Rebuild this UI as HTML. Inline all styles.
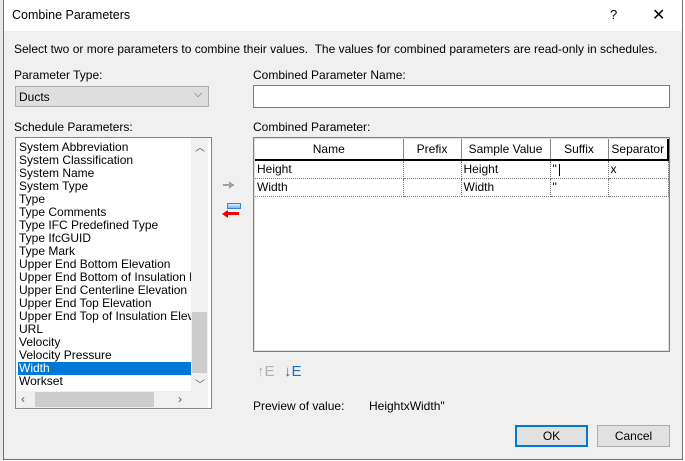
<!DOCTYPE html>
<html><head><style>
*{margin:0;padding:0;box-sizing:border-box}
body{width:685px;height:461px;background:#fff;font-family:"Liberation Sans",sans-serif;font-size:12px;color:#000;position:relative;overflow:hidden}
.a{position:absolute;white-space:nowrap}
.dlg{position:absolute;left:3px;top:-1px;width:680px;height:461px;background:#f0f0f0;border:1px solid #707070;border-top:none}
.tb{position:absolute;left:0;top:0;width:678px;height:32px;background:#fff}
.li{position:absolute;left:2px;height:13px;line-height:13px;width:173px;padding-left:1px;font-size:12px;overflow:hidden}
table{border-collapse:collapse;position:absolute;left:1px;top:1px}
td,th{font-weight:normal;height:18px;font-size:12px;padding:0 2px;text-align:left}
th{text-align:center;height:21px;border-right:1px solid #888;border-bottom:2px solid #000}
td{border-right:1px dotted #777;border-bottom:1px dotted #777}
</style></head><body>
<div style="position:absolute;left:0;top:0;width:3px;height:461px;background:#e8e8e8"></div>
<div class="dlg">
<div class="tb"></div>
<div class="a" style="left:8px;top:9px;font-size:12.5px">Combine Parameters</div>
<div class="a" style="left:606px;top:8px;font-size:13px">?</div>
<div class="a" style="left:648px;top:6px;font-size:16px">✕</div>
<div class="a" style="left:10px;top:43px">Select two or more parameters to combine their values.&nbsp; The values for combined parameters are read-only in schedules.</div>
<div class="a" style="left:10px;top:69px">Parameter Type:</div>
<div class="a" style="left:11px;top:87px;width:194px;height:21px;background:#dedede;border:1px solid #adadad"><span class="a" style="left:3px;top:3px">Ducts</span><span class="a" style="left:178px;top:1px;font-size:11px;color:#555">⌵</span></div>
<div class="a" style="left:10px;top:121px">Schedule Parameters:</div>
<div class="a" style="left:11px;top:138px;width:197px;height:272px;background:#fff;border:1px solid #828790">
<div class="li" style="top:3px">System Abbreviation</div>
<div class="li" style="top:16px">System Classification</div>
<div class="li" style="top:29px">System Name</div>
<div class="li" style="top:42px">System Type</div>
<div class="li" style="top:55px">Type</div>
<div class="li" style="top:68px">Type Comments</div>
<div class="li" style="top:81px">Type IFC Predefined Type</div>
<div class="li" style="top:94px">Type IfcGUID</div>
<div class="li" style="top:107px">Type Mark</div>
<div class="li" style="top:120px">Upper End Bottom Elevation</div>
<div class="li" style="top:133px">Upper End Bottom of Insulation Elevation</div>
<div class="li" style="top:146px">Upper End Centerline Elevation</div>
<div class="li" style="top:159px">Upper End Top Elevation</div>
<div class="li" style="top:172px">Upper End Top of Insulation Elevation</div>
<div class="li" style="top:185px">URL</div>
<div class="li" style="top:198px">Velocity</div>
<div class="li" style="top:211px">Velocity Pressure</div>
<div class="li" style="top:224px;background:#0078d7;color:#fff">Width</div>
<div class="li" style="top:237px">Workset</div>
<div class="a" style="left:175px;top:0;width:17px;height:253px;background:#f0f0f0"><div class="a" style="left:1px;top:174px;width:15px;height:61px;background:#cdcdcd"></div><span class="a" style="left:4px;top:1px;font-size:10px;color:#555">︿</span><span class="a" style="left:4px;top:238px;font-size:10px;color:#555">﹀</span></div>
<div class="a" style="left:0;top:253px;width:192px;height:17px;background:#f0f0f0"><div class="a" style="left:19px;top:1px;width:119px;height:15px;background:#cdcdcd"></div><span class="a" style="left:5px;top:1px;color:#555">‹</span><span class="a" style="left:162px;top:1px;color:#555">›</span></div>
</div>
<div class="a" style="left:219px;top:185px;width:11px;height:2px;background:#a0a0a0"></div>
<div class="a" style="left:225px;top:182px;border-left:5px solid #a0a0a0;border-top:4px solid transparent;border-bottom:4px solid transparent"></div>
<div class="a" style="left:223px;top:204px;width:14px;height:6px;background:linear-gradient(#d8ecff,#7ab6ef);border:1px solid #3a84d0"></div>
<div class="a" style="left:223px;top:213px;width:12px;height:3px;background:#e00"></div>
<div class="a" style="left:218px;top:211px;border-right:6px solid #e00;border-top:4px solid transparent;border-bottom:4px solid transparent"></div>
<div class="a" style="left:249px;top:69px">Combined Parameter Name:</div>
<div class="a" style="left:249px;top:86px;width:417px;height:23px;background:#fff;border:1px solid #7a7a7a"></div>
<div class="a" style="left:249px;top:121px">Combined Parameter:</div>
<div class="a" style="left:249px;top:138px;width:417px;height:215px;background:#fff;border:1px solid #828282;outline:1px solid #ddd;outline-offset:-2px">
<table>
<tr><th style="width:148px">Name</th><th style="width:58px">Prefix</th><th style="width:89px">Sample Value</th><th style="width:58px">Suffix</th><th style="width:60px;border-right:2px solid #000">Separator</th></tr>
<tr><td>Height</td><td></td><td>Height</td><td>"<span style="display:inline-block;width:1px;height:12px;background:#000;vertical-align:middle;margin-left:2px"></span></td><td>x</td></tr>
<tr><td>Width</td><td></td><td>Width</td><td>"</td><td></td></tr>
</table>
</div>
<div class="a" style="left:253px;top:364px;font-size:15px;color:#b0b0b0;font-weight:bold">↑<span style="font-weight:normal">E</span></div>
<div class="a" style="left:280px;top:364px;font-size:15px;color:#1a6fc8;font-weight:bold">↓<span style="font-weight:normal">E</span></div>
<div class="a" style="left:249px;top:400px">Preview of value:</div>
<div class="a" style="left:365px;top:400px">HeightxWidth"</div>
<div class="a" style="left:511px;top:426px;width:73px;height:22px;background:#e1e1e1;border:2px solid #0078d7;text-align:center;line-height:18px">OK</div>
<div class="a" style="left:593px;top:426px;width:73px;height:22px;background:#e1e1e1;border:1px solid #adadad;text-align:center;line-height:20px">Cancel</div>
</div>
</body></html>
